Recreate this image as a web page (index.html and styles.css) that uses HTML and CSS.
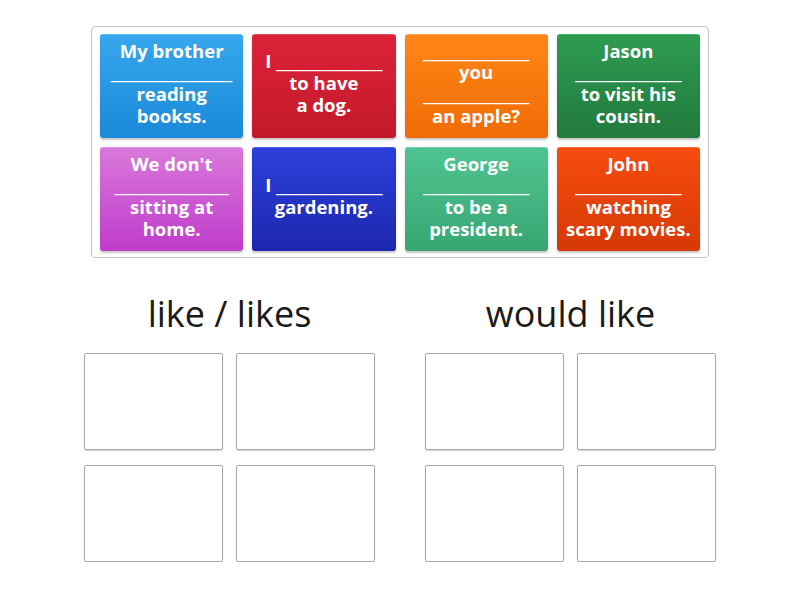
FILE: index.html
```html
<!DOCTYPE html>
<html>
<head>
    <title>like / would like</title>
    <link rel="stylesheet" href="styles.css">
</head>
<body>
    <!-- Cards to sort -->
    <div class="board">
        <div class="tile blue"><p>My brother<br>________________<br>reading<br>bookss.</p></div>
        <div class="tile red"><p>I ______________<br>to have<br>a dog.</p></div>
        <div class="tile orange"><p>______________<br>you<br>______________<br>an apple?</p></div>
        <div class="tile green"><p>Jason<br>______________<br>to visit his<br>cousin.</p></div>
        <div class="tile purple"><p>We don't<br>_______________<br>sitting at<br>home.</p></div>
        <div class="tile navy"><p>I ______________<br>gardening.</p></div>
        <div class="tile teal"><p>George<br>______________<br>to be a<br>president.</p></div>
        <div class="tile flame"><p>John<br>______________<br>watching<br>scary movies.</p></div>
    </div>

    <!-- Drop zones -->
    <div class="groups">
        <div class="group">
            <h2>like / likes</h2>
            <div class="slots">
                <div class="slot"></div>
                <div class="slot"></div>
                <div class="slot"></div>
                <div class="slot"></div>
            </div>
        </div>
        <div class="group">
            <h2>would like</h2>
            <div class="slots">
                <div class="slot"></div>
                <div class="slot"></div>
                <div class="slot"></div>
                <div class="slot"></div>
            </div>
        </div>
    </div>
</body>
</html>
```

FILE: styles.css
```css
* {
    margin: 0px;
    padding: 0px;
    box-sizing: border-box;
    font-family: 'Open Sans', sans-serif;
}

body {
    background-color: #ffffff;
}

.board {
    width: 618px;
    margin: 26px auto 0;
    border: 1px solid #c4c4c4;
    border-radius: 4px;
    padding: 7px 8px 6px;
    display: grid;
    grid-template-columns: repeat(4, 1fr);
    grid-auto-rows: 104px;
    gap: 9px;
}

.tile {
    display: flex;
    flex-direction: column;
    justify-content: center;
    border-radius: 3px;
    padding: 0 4px 7px;
    color: #ffffff;
    text-align: center;
    font-weight: 700;
    font-size: 18.5px;
    line-height: 21.7px;
    box-shadow: 0 2px 2px rgba(0, 0, 0, 0.22);
    white-space: nowrap;
}

.blue { background: linear-gradient(#36a6ee, #1a8ad8); border-top: 1px solid #5cb8f2; }
.red { background: linear-gradient(#dc2238, #c31a2b); border-top: 1px solid #e5495b; }
.orange { background: linear-gradient(#ff8618, #ef6c04); border-top: 1px solid #ff9c45; }
.green { background: linear-gradient(#2d9b50, #227a3d); border-top: 1px solid #3fb563; }
.purple { background: linear-gradient(#d878da, #bf3ccb); border-top: 1px solid #e292e4; }
.navy { background: linear-gradient(#2b40da, #1c27ae); border-top: 1px solid #4c5fe2; }
.teal { background: linear-gradient(#4fc490, #37a673); border-top: 1px solid #6fd0a5; }
.flame { background: linear-gradient(#f64c0e, #d63906); border-top: 1px solid #f86c3a; }

.groups {
    display: flex;
    justify-content: center;
    gap: 50px;
    margin-top: 33px;
}

.group h2 {
    text-align: center;
    font-weight: 400;
    font-size: 36px;
    line-height: 46px;
    color: #1a1a1a;
    margin-bottom: 16px;
}

.slots {
    display: grid;
    grid-template-columns: 139px 139px;
    grid-auto-rows: 97px;
    column-gap: 13px;
    row-gap: 15px;
}

.slot {
    border: 1px solid #a8a8a8;
    border-radius: 2px;
    box-shadow: 0 1px 1px rgba(0, 0, 0, 0.18);
}
```
